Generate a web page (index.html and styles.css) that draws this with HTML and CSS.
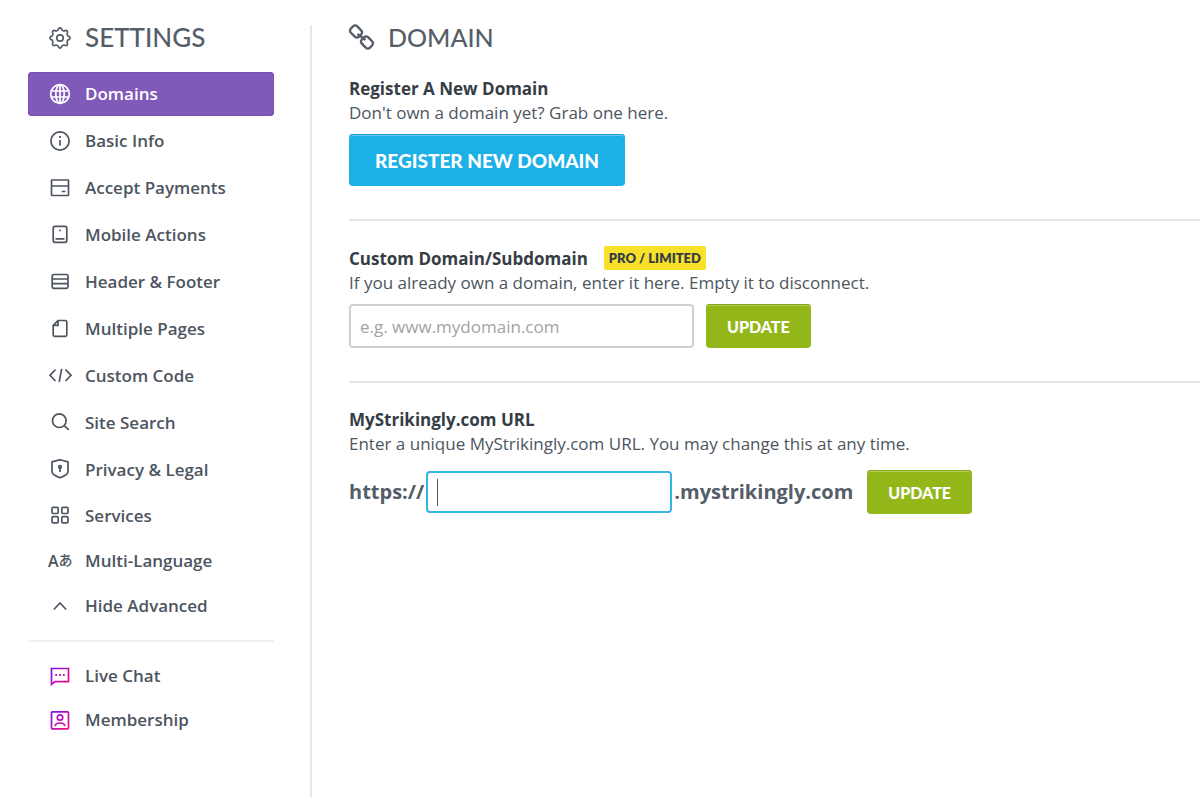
FILE: index.html
```html
<!DOCTYPE html>
<html lang="en">
<head>
<meta charset="utf-8">
<meta name="viewport" content="width=device-width, initial-scale=1">
<title>Settings – Domain</title>
<link rel="stylesheet" href="styles.css">
</head>
<body>
<div class="layout">
  <aside class="sidebar">
    <h1 class="title sidebar-title">
      <svg class="icon" viewBox="0 0 24 24"><path d="M10.600 2.800A1.600 1.600 0 0 1 13.400 2.800A2.700 2.700 0 0 0 17.500 4.500A1.600 1.600 0 0 1 19.500 6.500A2.700 2.700 0 0 0 21.200 10.600A1.600 1.600 0 0 1 21.200 13.400A2.700 2.700 0 0 0 19.500 17.500A1.600 1.600 0 0 1 17.500 19.500A2.700 2.700 0 0 0 13.400 21.200A1.600 1.600 0 0 1 10.600 21.200A2.700 2.700 0 0 0 6.500 19.500A1.600 1.600 0 0 1 4.500 17.500A2.700 2.700 0 0 0 2.800 13.400A1.600 1.600 0 0 1 2.800 10.600A2.700 2.700 0 0 0 4.500 6.500A1.600 1.600 0 0 1 6.500 4.500A2.700 2.700 0 0 0 10.600 2.800Z"/><circle cx="12" cy="12" r="3.2"/></svg>
      <span>SETTINGS</span>
    </h1>
    <nav class="nav" aria-label="Settings">
      <a class="nav-item active" href="#domains" aria-current="page">
        <svg class="icon" viewBox="0 0 24 24"><circle cx="12" cy="12" r="9.3"/><ellipse cx="12" cy="12" rx="4.2" ry="9.3"/><path d="M12 2.7v18.6M3.4 9h17.2M3.4 15h17.2"/></svg>Domains</a>
      <a class="nav-item" href="#basic">
        <svg class="icon" viewBox="0 0 24 24"><circle cx="12" cy="12" r="9.1"/><path d="M12 11v5.5M12 7v2"/></svg>Basic Info</a>
      <a class="nav-item" href="#payments">
        <svg class="icon" viewBox="0 0 24 24"><rect x="3.5" y="4" width="17" height="15.5" rx=".6"/><path d="M3.5 10h17M13.8 15.5h3.7"/></svg>Accept Payments</a>
      <a class="nav-item" href="#mobile">
        <svg class="icon" viewBox="0 0 24 24"><rect x="5.2" y="3.3" width="13.6" height="16" rx="1.8"/><path d="M7.5 15.8h9M11.2 7.3h1.6"/></svg>Mobile Actions</a>
      <a class="nav-item" href="#header">
        <svg class="icon" viewBox="0 0 24 24"><rect x="4.2" y="4.5" width="15.8" height="13.8" rx="1.6"/><path d="M4.2 9h15.8M4.2 13.7h15.8"/></svg>Header &amp; Footer</a>
      <a class="nav-item" href="#pages">
        <svg class="icon" viewBox="0 0 24 24"><path d="M10 3.5h7.3a1.5 1.5 0 0 1 1.5 1.5v12.8a1.5 1.5 0 0 1-1.5 1.5H6.7a1.5 1.5 0 0 1-1.5-1.5V8.3zM10 3.5v4.8H5.2"/></svg>Multiple Pages</a>
      <a class="nav-item" href="#code">
        <svg class="icon" viewBox="0 0 24 24"><path d="M7.500 5.500L2 11.300 7.500 17M17.500 5.500l5.500 5.800-5.500 5.700M13.700 4.800l-2.500 13"/></svg>Custom Code</a>
      <a class="nav-item" href="#search">
        <svg class="icon" viewBox="0 0 24 24"><circle cx="11.300" cy="9.700" r="6.800"/><path d="M16.200 14.600l4.600 4.200"/></svg>Site Search</a>
      <a class="nav-item" href="#privacy">
        <svg class="icon" viewBox="0 0 24 24"><path d="M12 1.700l8 2.200v9.800c0 1.900-3.400 4.200-8 6.100-4.600-1.900-8-4.200-8-6.100V3.900z"/><circle cx="12" cy="9" r="1.300"/><path d="M12 9.500v4.500"/></svg>Privacy &amp; Legal</a>
      <a class="nav-item tight" href="#services">
        <svg class="icon" viewBox="0 0 24 24"><rect x="4" y="3.300" width="6.200" height="6.200" rx="1.200"/><rect x="13.800" y="3.300" width="6.200" height="6.200" rx="1.200"/><rect x="4" y="12.700" width="6.200" height="6.200" rx="1.200"/><rect x="13.800" y="12.700" width="6.200" height="6.200" rx="1.200"/></svg>Services</a>
      <a class="nav-item tight" href="#language">
        <span class="icon glyphs" aria-hidden="true"><span>A</span><span class="kana">あ</span></span>Multi-Language</a>
      <a class="nav-item tight" href="#advanced">
        <svg class="icon" viewBox="0 0 24 24"><path d="M5.800 15.500L12 9l6.200 6.500"/></svg>Hide Advanced</a>
    </nav>
    <nav class="nav nav-extra" aria-label="Account">
      <a class="nav-item" href="#chat">
        <svg class="icon vivid" viewBox="0 0 24 24"><defs><linearGradient id="vivid" gradientUnits="userSpaceOnUse" x1="3" y1="3" x2="21" y2="21"><stop offset="0" stop-color="#7a10f0"/><stop offset=".5" stop-color="#b80fb8"/><stop offset="1" stop-color="#fb0f7c"/></linearGradient></defs><path d="M3.500 4.500h17v13.200H7l-3.500 2.700z"/><path d="M7.300 11h1.700M11.200 11h1.700M15 11h1.700" stroke-width="2"/></svg>Live Chat</a>
      <a class="nav-item" href="#membership">
        <svg class="icon vivid" viewBox="0 0 24 24"><rect x="3.500" y="3.800" width="17" height="17" rx=".8"/><circle cx="12" cy="9.500" r="2.700"/><path d="M7.300 18.200c0-4.300 9.400-4.300 9.400 0"/></svg>Membership</a>
    </nav>
  </aside>

  <main class="main">
    <h2 class="title main-title">
      <svg class="icon link-icon" viewBox="0 0 26 26"><g transform="rotate(45 12.500 12)"><rect x="-1" y="7.500" width="11.500" height="9" rx="3"/><rect x="14.500" y="7.500" width="11.500" height="9" rx="3"/><path d="M7.500 12.500h3.500M14 11.500h3.500"/><path d="M10.500 12h4"/></g></svg>
      <span>DOMAIN</span>
    </h2>

    <section class="section">
      <h3>Register A New Domain</h3>
      <p>Don't own a domain yet? Grab one here.</p>
      <button class="btn btn-blue" type="button">REGISTER NEW DOMAIN</button>
    </section>

    <section class="section">
      <div class="heading-row">
        <h3><label for="domain">Custom Domain/Subdomain</label></h3>
        <span class="badge">PRO / LIMITED</span>
      </div>
      <p>If you already own a domain, enter it here. Empty it to disconnect.</p>
      <form class="form-row">
        <input class="field" id="domain" type="text" placeholder="e.g. www.mydomain.com">
        <button class="btn btn-green" type="button">UPDATE</button>
      </form>
    </section>

    <section class="section">
      <h3><label for="url">MyStrikingly.com URL</label></h3>
      <p>Enter a unique MyStrikingly.com URL. You may change this at any time.</p>
      <form class="url-row">
        <span class="affix">https://</span>
        <input class="field field-active" id="url" type="text">
        <span class="affix">.mystrikingly.com</span>
        <button class="btn btn-green" type="button">UPDATE</button>
      </form>
    </section>
  </main>
</div>
</body>
</html>
```
FILE: styles.css
```css
* { box-sizing: border-box; }

body {
  margin: 0;
  background: #fff;
  color: #4d5560;
  font-family: "Open Sans", "Noto Sans CJK JP", sans-serif;
  font-size: 17px;
  line-height: 24px;
}

h1, h2, h3, p { margin: 0; }

.layout {
  display: flex;
  min-height: 100vh;
  padding-top: 25px;
}

.sidebar {
  flex: none;
  width: 312px;
  padding: 0 36px 25px 28px;
  border-right: 2px solid #e6e7e9;
}

.title {
  display: flex;
  align-items: center;
  gap: 13px;
  height: 26px;
  color: #555d68;
  font-family: Lato, sans-serif;
  font-size: 26px;
  font-weight: 500;
  line-height: 24px;
}

.title span { padding-bottom: 2px; }

.sidebar-title { padding-left: 20px; }

.main-title {
  margin-bottom: 1px;
  font-size: 25px;
}

.icon {
  flex: none;
  width: 24px;
  height: 24px;
  fill: none;
  stroke: currentColor;
  stroke-width: 1.7;
}

.link-icon {
  width: 26px;
  height: 26px;
  overflow: visible;
  stroke-width: 2.4;
}

.vivid { stroke: url(#vivid); }

.nav {
  display: flex;
  flex-direction: column;
  gap: 3px;
  margin-top: 21px;
}

.nav-item {
  display: flex;
  align-items: center;
  gap: 13px;
  height: 44px;
  padding-left: 20px;
  border-radius: 4px;
  color: #4d5560;
  font-weight: 600;
  text-decoration: none;
}

.nav-item.tight { height: 42px; }

.nav-item.active {
  background: #8159b8;
  box-shadow: inset 0 0 0 1px #7a4db8;
  color: #fff;
}

.nav-extra {
  gap: 0;
  margin-top: 13px;
  padding-top: 12px;
  border-top: 2px solid #eff0f1;
}

.glyphs {
  display: flex;
  align-items: center;
  font-size: 16px;
}

.kana {
  padding-bottom: 4px;
  font-family: "Noto Sans CJK JP", sans-serif;
  font-size: 14px;
  font-weight: 500;
}

.main {
  flex: 1;
  min-width: 0;
  padding-left: 37px;
}

.section {
  padding: 24px 0 33px;
  border-bottom: 2px solid #e6e7e9;
}

.section:last-child { border-bottom: 0; }

h3 {
  color: #363d45;
  font-size: 17px;
  font-weight: 700;
  line-height: 25px;
}

.heading-row {
  display: flex;
  align-items: center;
  gap: 16px;
  height: 26px;
}

.badge {
  padding: 0 5px;
  border-radius: 2px;
  background: #f8e12b;
  color: #363d45;
  font-family: Lato, sans-serif;
  font-size: 13px;
  font-weight: 800;
}

.btn {
  border: 0;
  border-radius: 4px;
  color: #fff;
  font-family: Lato, sans-serif;
  font-weight: 900;
}

.btn-blue {
  height: 52px;
  margin-top: 9px;
  padding: 0 26px;
  background: #1cb0e7;
  box-shadow: inset 0 1px #18a0d4, inset 0 2px #62c9ef;
  font-size: 19px;
}

.btn-green {
  height: 44px;
  padding: 0 21px;
  background: #93b719;
  box-shadow: inset 0 1px #86a815, inset 0 2px #b3cd5c;
  font-size: 16px;
}

.form-row {
  display: flex;
  gap: 12px;
  margin-top: 9px;
}

.field {
  width: 345px;
  height: 44px;
  padding: 0 9px;
  border: 2px solid #cfd1d5;
  border-radius: 4px;
  background: #fff;
  color: #4d5560;
  font: inherit;
}

.field::placeholder { color: #a3a3a3; }

.url-row {
  display: flex;
  align-items: center;
  gap: 2px;
  margin-top: 14px;
}

.url-row .btn { margin-left: 12px; }

.field-active {
  width: 246px;
  height: 42px;
  border-color: #35b5e5;
  background: linear-gradient(#4d5560, #4d5560) 9px center / 1px 27px no-repeat #fff;
}

.affix {
  color: #555d68;
  font-size: 20px;
  font-weight: 700;
}
```
